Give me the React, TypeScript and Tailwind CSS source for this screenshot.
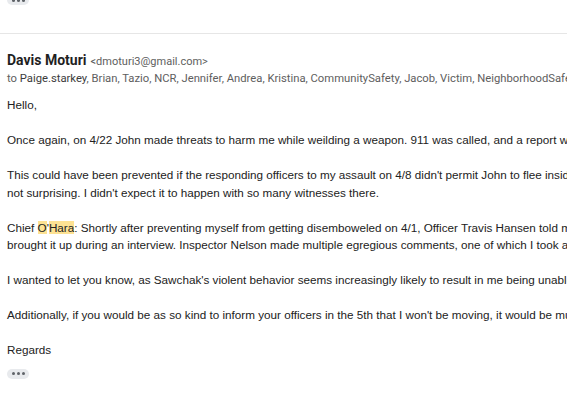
import React from "react";

function Dots() {
  return (
    <div className="flex h-[10px] w-[22px] items-center justify-center gap-[2px] rounded-full bg-[#e8eaed]">
      <span className="h-[3px] w-[3px] rounded-full bg-[#5f6368]" />
      <span className="h-[3px] w-[3px] rounded-full bg-[#5f6368]" />
      <span className="h-[3px] w-[3px] rounded-full bg-[#5f6368]" />
    </div>
  );
}

export default function App() {
  const body = { fontFamily: '"Liberation Sans", Arial, sans-serif' };
  const head = { fontFamily: 'Roboto, "Noto Sans", sans-serif' };
  return (
    <div className="h-[402px] w-[567px] overflow-hidden bg-white">
      <div className="-mt-[5px] pl-[7px]">
        <Dots />
      </div>
      <div className="mt-[28px] h-px w-full bg-[#e6e6e6]" />
      <div className="whitespace-nowrap pl-[7px] pt-[17px]">
        <div className="flex items-baseline gap-[4px] leading-[18px]" style={head}>
          <span className="text-[14px] font-bold leading-[18px] text-[#1f1f1f]">Davis Moturi</span>
          <span className="text-[11px] leading-[18px] text-[#5e5e5e]">&lt;dmoturi3@gmail.com&gt;</span>
        </div>
        <div className="text-[11.25px] leading-[16px] text-[#5e5e5e]" style={head}>
          to <span className="text-[#3c3c3c]">Paige.starkey</span>, Brian, Tazio, NCR, Jennifer, Andrea, Kristina, CommunitySafety, Jacob, Victim, NeighborhoodSafety
        </div>
        <div className="mt-[9px] text-[11.7px] leading-[17.5px] text-[#222222]" style={body}>
          <div>Hello,</div>
          <br />
          <div>Once again, on 4/22 John made threats to harm me while weilding a weapon. 911 was called, and a report was filed.</div>
          <br />
          <div>This could have been prevented if the responding officers to my assault on 4/8 didn't permit John to flee inside his home.</div>
          <div>not surprising. I didn't expect it to happen with so many witnesses there.</div>
          <br />
          <div>
            Chief <span className="bg-[#fde293]">O</span>'<span className="bg-[#fde293]">Hara</span>: Shortly after preventing myself from getting disemboweled on 4/1, Officer Travis Hansen told me that he
          </div>
          <div>brought it up during an interview. Inspector Nelson made multiple egregious comments, one of which I took as a threat.</div>
          <br />
          <div>I wanted to let you know, as Sawchak's violent behavior seems increasingly likely to result in me being unable to continue.</div>
          <br />
          <div>Additionally, if you would be as so kind to inform your officers in the 5th that I won't be moving, it would be much appreciated.</div>
          <br />
          <div>Regards</div>
        </div>
        <div className="mt-[10px]">
          <Dots />
        </div>
      </div>
    </div>
  );
}
